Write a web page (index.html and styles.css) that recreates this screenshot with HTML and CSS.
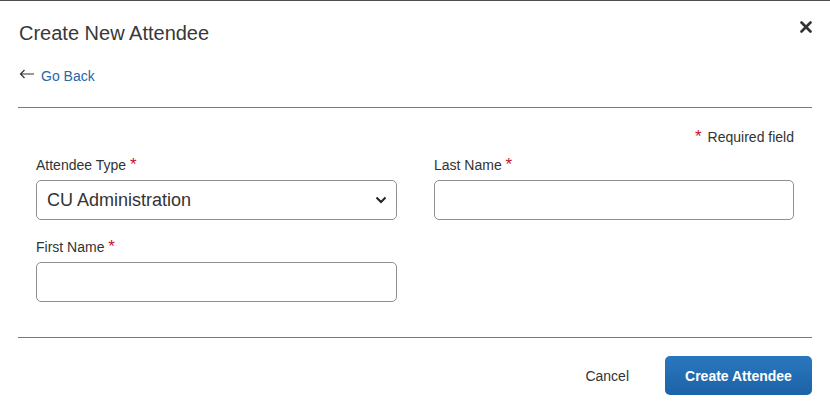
FILE: index.html
```html
<!DOCTYPE html>
<html>
<head>
<meta charset="utf-8">
<link rel="stylesheet" href="styles.css">
</head>
<body>
<div class="modal">
  <div class="header">
    <h1 class="title">Create New Attendee</h1>
    <button class="close" aria-label="Close">
      <svg width="12" height="12" viewBox="0 0 12 12"><path d="M1.5 1.5 L10.5 10.5 M10.5 1.5 L1.5 10.5" stroke="#333" stroke-width="2.6" stroke-linecap="round"/></svg>
    </button>
  </div>
  <a class="back" href="#">
    <svg class="back-arrow" width="16" height="10" viewBox="0 0 16 10"><path d="M15 5 H1.5 M5.5 1 L1.5 5 L5.5 9" stroke="#333" stroke-width="1.2" fill="none"/></svg>
    <span>Go Back</span>
  </a>
  <hr class="rule">
  <div class="form">
    <div class="required-note"><span class="star star-note">*</span>Required field</div>
    <div class="grid">
      <div class="field">
        <label class="label">Attendee Type <span class="star">*</span></label>
        <div class="select">
          <span>CU Administration</span>
          <svg width="12" height="8" viewBox="0 0 12 8"><path d="M1.5 1.5 L6 6 L10.5 1.5" stroke="#222" stroke-width="2" fill="none"/></svg>
        </div>
      </div>
      <div class="field">
        <label class="label">Last Name <span class="star">*</span></label>
        <div class="input"></div>
      </div>
      <div class="field">
        <label class="label">First Name <span class="star">*</span></label>
        <div class="input"></div>
      </div>
    </div>
  </div>
  <hr class="rule rule-bottom">
  <div class="footer">
    <button class="cancel">Cancel</button>
    <button class="primary">Create Attendee</button>
  </div>
</div>
</body>
</html>
```

FILE: styles.css
```css
html, body {
  margin: 0;
  padding: 0;
  background: #fff;
}
body {
  font-family: "Liberation Sans", Arial, sans-serif;
  color: #333;
}
.modal {
  border-top: 1px solid #4d4d4d;
  width: 830px;
  height: 413px;
  box-sizing: border-box;
}
.header {
  display: flex;
  justify-content: space-between;
  align-items: flex-start;
  padding: 20px 18px 0 19px;
}
.title {
  margin: 0;
  font-size: 20px;
  font-weight: normal;
  line-height: 24px;
  color: #383838;
}
.close {
  border: none;
  background: none;
  padding: 0;
  width: 12px;
  height: 12px;
  display: flex;
  cursor: pointer;
}
.back {
  display: flex;
  align-items: center;
  gap: 6px;
  margin: 21px 0 0 19px;
  height: 20px;
  text-decoration: none;
  color: #2767ab;
  font-size: 14px;
  width: max-content;
}
.back-arrow {
  margin-top: -4px;
}
.rule {
  border: none;
  border-top: 1px solid #7a7a7a;
  margin: 21px 18px 0 18px;
  height: 0;
}
.form {
  padding: 20px 36px 0 36px;
}
.required-note {
  text-align: right;
  font-size: 14px;
  line-height: 18px;
  color: #333;
}
.star {
  color: #c8102e;
  font-size: 17px;
  line-height: 0;
}
.star-note {
  margin-right: 6px;
}
.grid {
  display: grid;
  grid-template-columns: 361px 360px;
  column-gap: 37px;
  row-gap: 18px;
  margin-top: 10px;
}
.label {
  display: block;
  font-size: 14px;
  line-height: 18px;
  margin-bottom: 6px;
  color: #333;
}
.select, .input {
  box-sizing: border-box;
  height: 40px;
  border: 1px solid #8f8f8f;
  border-radius: 5px;
  background: #fff;
}
.select {
  display: flex;
  align-items: center;
  justify-content: space-between;
  padding: 0 9px 0 10px;
  font-size: 18px;
  color: #333;
}
.rule-bottom {
  margin-top: 35px;
}
.footer {
  display: flex;
  justify-content: flex-end;
  align-items: center;
  gap: 36px;
  padding: 18px 18px 0 0;
}
.cancel {
  border: none;
  background: none;
  font-family: inherit;
  font-size: 14px;
  color: #333;
  padding: 0;
}
.primary {
  border: none;
  border-radius: 5px;
  background: linear-gradient(#2a77bf, #1d62a6);
  color: #fff;
  font-family: inherit;
  font-weight: bold;
  font-size: 14px;
  width: 147px;
  height: 39px;
  padding: 0;
}
```
